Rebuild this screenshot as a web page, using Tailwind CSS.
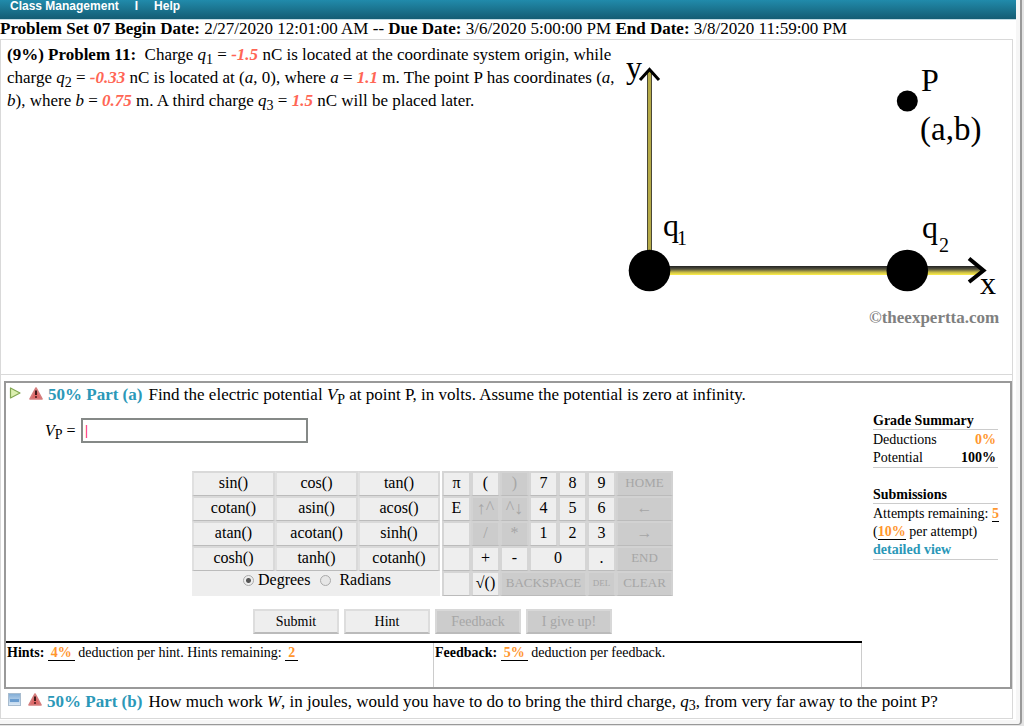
<!DOCTYPE html>
<html lang="en">
<head>
    <meta charset="UTF-8">
    <meta name="viewport" content="width=device-width, initial-scale=1.0">
    <script src="https://cdn.jsdelivr.net/npm/@tailwindcss/browser@4"></script>
    <title>Problem Set 07</title>
</head>
<body class="bg-[#e4e4e4] min-h-screen pr-[2px] pb-px font-['Liberation_Serif',serif] text-[16px] leading-[20px] text-black overflow-x-hidden">
    <div class="bg-[#f6f6f6] border-r-2 border-b border-[#999] rounded-br pr-1 pb-1">
        <div class="bg-white pb-px">
            <header class="h-[20px] bg-linear-to-b from-[#218bab] to-[#155d74] border-b border-[#c3dce4]">
                <nav class="flex gap-[16px] pl-[10px] h-[12px] items-center font-['Liberation_Sans',sans-serif] text-[12px] font-bold text-white">
                    <a href="#">Class Management</a>
                    <span>I</span>
                    <a href="#">Help</a>
                </nav>
            </header>

            <p class="h-[19px] text-[17px] leading-[18px] whitespace-nowrap"><b>Problem Set 07 Begin Date:</b> 2/27/2020 12:01:00 AM -- <b>Due Date:</b> 3/6/2020 5:00:00 PM <b>End Date:</b> 3/8/2020 11:59:00 PM</p>

            <!-- Problem statement -->
            <section class="mr-[3px] flex justify-between border border-[#d9d9d9] pl-[6px] pb-[35px]">
                <p class="w-[600px] pt-[3px] text-[17px] leading-[23px] whitespace-nowrap">
                    <b>(9%) Problem 11:</b> &nbsp;Charge <i>q</i><sub class="text-[14px]">1</sub> = <b class="italic text-[#ff6655]">-1.5</b> nC is located at the coordinate system origin, while<br>
                    charge <i>q</i><sub class="text-[14px]">2</sub> = <b class="italic text-[#ff6655]">-0.33</b> nC is located at (<i>a</i>, 0), where <i>a</i> = <b class="italic text-[#ff6655]">1.1</b> m. The point P has coordinates (<i>a</i>,<br>
                    <i>b</i>), where <i>b</i> = <b class="italic text-[#ff6655]">0.75</b> m. A third charge <i>q</i><sub class="text-[14px]">3</sub> = <b class="italic text-[#ff6655]">1.5</b> nC will be placed later.
                </p>
                <svg class="shrink-0" width="400" height="299" viewBox="612 40 400 299" font-family="Liberation Serif, serif">
                    <defs>
                        <linearGradient id="axisX" x1="0" y1="0" x2="0" y2="1">
                            <stop offset="0" stop-color="#222"/>
                            <stop offset="0.35" stop-color="#55533f"/>
                            <stop offset="0.7" stop-color="#c9bd45"/>
                            <stop offset="1" stop-color="#fff04a"/>
                        </linearGradient>
                    </defs>
                    <rect x="647" y="70" width="5" height="190" fill="#4a4836"/>
                    <rect x="648" y="70" width="3" height="190" fill="#b5aa48"/>
                    <path d="M640 80L649.500 69.500L659 80" fill="none" stroke="#000" stroke-width="3"/>
                    <rect x="665" y="266" width="316" height="9" fill="url(#axisX)"/>
                    <path d="M969 258.500L983.500 270.500L969 282" fill="none" stroke="#000" stroke-width="4"/>
                    <circle cx="649.500" cy="270.500" r="20.800"/>
                    <circle cx="907.300" cy="270.500" r="20.800"/>
                    <circle cx="907.300" cy="101" r="10.500"/>
                    <text x="626" y="78" font-size="32">y</text>
                    <text x="921" y="91" font-size="32">P</text>
                    <text x="920" y="140" font-size="33">(a,b)</text>
                    <text x="663" y="236" font-size="32">q</text>
                    <text x="677" y="245" font-size="20">1</text>
                    <text x="922" y="238" font-size="32">q</text>
                    <text x="939" y="252" font-size="20">2</text>
                    <text x="980" y="294" font-size="32">x</text>
                    <text x="869" y="323" font-size="17" font-weight="bold" fill="#808080">©theexpertta.com</text>
                </svg>
            </section>

            <section class="mr-[3px] border border-t-0 border-[#d9d9d9] pt-[6px] pl-[3px]">
                <!-- Part (a) -->
                <div class="border-2 border-[#999] pt-[2px] min-h-[308px] flex flex-col">
                    <div class="flex items-center h-[20px] pl-[3px] text-[17px]">
                        <svg class="mb-[4px] w-[12px] h-[12px]" viewBox="0 0 12 12"><path d="M1.500 1V11L11 6Z" fill="#dcefb0" stroke="#83a853" stroke-width="1.200" stroke-linejoin="round"/></svg>
                        <svg class="mb-[4px] ml-[8px] w-[14px] h-[13px]" viewBox="0 0 14 13"><path d="M7 1L13 12H1Z" fill="#df6868" stroke="#d57d7d" stroke-width="1.600" stroke-linejoin="round"/><path d="M7 3.500V8" stroke="#401818" stroke-width="2"/><circle cx="7" cy="10" r="1" fill="#401818"/></svg>
                        <b class="ml-[5px] text-[#2b98b8]">50% Part (a)</b>
                        <span class="ml-[6px]">Find the electric potential <i>V</i><sub class="text-[14px]">P</sub> at point P, in volts. Assume the potential is zero at infinity.</span>
                    </div>

                    <div class="flex justify-between grow">
                        <div class="w-[856px] flex flex-col">
                            <div class="flex items-center mt-[13px] pl-[39px]">
                                <label for="answer" class="w-[36px] whitespace-nowrap"><i>V</i><sub class="text-[14px]">P</sub> =</label>
                                <input id="answer" type="text" value="|" class="w-[227px] h-[25px] border-2 border-[#858987] px-[2px] text-[14px] font-bold text-[#ff1a66] outline-none">
                            </div>

                            <!-- Function and number keypads -->
                            <div class="flex gap-[2px] mt-[28px] ml-[186px]">
                                <div class="bg-[#eeeeee]">
                                    <div id="functions" class="grid grid-cols-[83px_83px_82px] auto-rows-[25px]"></div>
                                    <div class="flex justify-center h-[25px] pl-[2px] leading-[18px]">
                                        <input id="degrees" type="radio" name="angle" checked class="appearance-none mt-[4px] size-[11px] rounded-full border border-[#aaa] bg-[radial-gradient(circle,#555_0_2px,#eee_3px)]">
                                        <label for="degrees" class="ml-[4px]">Degrees</label>
                                        <input id="radians" type="radio" name="angle" class="appearance-none ml-[10px] mt-[4px] size-[11px] rounded-full border border-[#aaa] bg-[#e6e6e6]">
                                        <label for="radians" class="ml-[8px]">Radians</label>
                                    </div>
                                </div>
                                <div id="keys" class="grid grid-cols-[29px_29px_29px_29px_29px_29px_57px] auto-rows-[25px] h-[125px]"></div>
                            </div>

                            <div class="flex gap-[5px] mt-[13px] ml-[247px] text-[14px] leading-[18px]">
                                <button class="w-[86px] h-[25px] bg-[#eee] border-2 border-[#ddd] border-b-[#bbb]">Submit</button>
                                <button class="w-[86px] h-[25px] bg-[#eee] border-2 border-[#ddd] border-b-[#bbb]">Hint</button>
                                <button disabled class="w-[86px] h-[25px] bg-[#ccc] border-2 border-[#d8d8d8] border-b-[#bbb] text-[#a6a6a6]">Feedback</button>
                                <button disabled class="w-[86px] h-[25px] bg-[#ccc] border-2 border-[#d8d8d8] border-b-[#bbb] text-[#a6a6a6]">I give up!</button>
                            </div>

                            <div class="grid grid-cols-2 grow mt-[7px] border-t-2 border-black text-[14px] leading-[20px]">
                                <p class="pl-px border-r border-[#ccc]"><b>Hints:</b> <b class="inline-block h-[18px] px-[3px] border-b border-black text-[#ff962d]">4%</b> deduction per hint. Hints remaining: <b class="inline-block h-[18px] px-[3px] border-b border-black text-[#ff962d]">2</b></p>
                                <p class="pl-px border-r border-[#ccc]"><b>Feedback:</b> <b class="inline-block h-[18px] px-[3px] border-b border-black text-[#ff962d]">5%</b> deduction per feedback.</p>
                            </div>
                        </div>

                        <aside class="w-[125px] mr-[12px] mt-[7px] text-[14px] leading-[18px] whitespace-nowrap">
                            <h2 class="h-[18px] font-bold border-b border-[#ccc]">Grade Summary</h2>
                            <div class="pt-px border-b border-[#ccc] pr-[2px]">
                                <p class="flex justify-between">Deductions <b class="text-[#ff962d]">0%</b></p>
                                <p class="flex justify-between">Potential <b>100%</b></p>
                            </div>
                            <h2 class="h-[18px] font-bold border-b border-[#ccc] mt-[18px]">Submissions</h2>
                            <div class="pt-px border-b border-[#ccc]">
                                <p>Attempts remaining: <b class="inline-block h-[17px] border-b border-black text-[#ff962d]">5</b></p>
                                <p>(<b class="inline-block h-[17px] border-b border-black text-[#ff962d]">10%</b> per attempt)</p>
                                <a href="#" class="block h-[18px] font-bold text-[#2b98b8]">detailed view</a>
                            </div>
                        </aside>
                    </div>
                </div>

                <!-- Part (b) -->
                <div class="flex items-center h-[29px] pl-[4px] pb-[4px] text-[17px] whitespace-nowrap">
                    <svg class="w-[13px] h-[13px] mb-[4px]" viewBox="0 0 13 13"><defs><linearGradient id="box" x1="0" y1="0" x2="0" y2="1"><stop offset="0" stop-color="#7fabd5"/><stop offset="1" stop-color="#deebf7"/></linearGradient></defs><rect x="0.500" y="0.500" width="12" height="12" fill="url(#box)" stroke="#a8bccf"/><rect x="2" y="6" width="9" height="3" fill="#6a9dd0"/></svg>
                    <svg class="ml-[7px] mb-[4px] w-[14px] h-[13px]" viewBox="0 0 14 13"><path d="M7 1L13 12H1Z" fill="#df6868" stroke="#d57d7d" stroke-width="1.600" stroke-linejoin="round"/><path d="M7 3.500V8" stroke="#401818" stroke-width="2"/><circle cx="7" cy="10" r="1" fill="#401818"/></svg>
                    <b class="ml-[5px] text-[#2b98b8]">50% Part (b)</b>
                    <span class="ml-[6px]">How much work <i>W</i>, in joules, would you have to do to bring the third charge, <i>q</i><sub class="text-[14px]">3</sub>, from very far away to the point P?</span>
                </div>
            </section>
        </div>
    </div>

    <script>
        const functions = ['sin()', 'cos()', 'tan()', 'cotan()', 'asin()', 'acos()', 'atan()', 'acotan()', 'sinh()', 'cosh()', 'tanh()', 'cotanh()'];

        // off: disabled key, extra: span or text size
        const keys = [
            { t: 'π' }, { t: '(' }, { t: ')', off: true }, { t: '7' }, { t: '8' }, { t: '9' }, { t: 'HOME', off: true, extra: 'text-[13px]' },
            { t: 'E' }, { t: '↑^', off: true, extra: 'text-[18px]' }, { t: '^↓', off: true, extra: 'text-[18px]' }, { t: '4' }, { t: '5' }, { t: '6' }, { t: '←', off: true },
            { t: '' }, { t: '/', off: true }, { t: '*', off: true }, { t: '1' }, { t: '2' }, { t: '3' }, { t: '→', off: true },
            { t: '' }, { t: '+' }, { t: '-' }, { t: '0', extra: 'col-span-2' }, { t: '.' }, { t: 'END', off: true, extra: 'text-[13px]' },
            { t: '' }, { t: '√()' }, { t: 'BACKSPACE', off: true, extra: 'col-span-3 text-[13px]' }, { t: 'DEL', off: true, extra: 'text-[9px]' }, { t: 'CLEAR', off: true, extra: 'text-[13px]' }
        ];

        document.getElementById('functions').innerHTML = functions.map(name => `
            <button class="pb-[2px] bg-[#eee] border-2 border-b border-[#d9d9d9] border-l-[#e0e0e0] border-b-[#bbb] leading-[18px]">${name}</button>
        `).join('');

        document.getElementById('keys').innerHTML = keys.map(key => `
            <button ${key.off ? 'disabled' : ''} class="flex items-center justify-center pb-[2px] whitespace-nowrap border-2 border-b leading-[18px] ${key.off ? 'bg-[#ccc] border-[#d2d2d2] border-b-[#bbb] text-[#a6a6a6]' : 'bg-[#eee] border-[#d5d5d5] border-b-[#bbb]'} ${key.extra || ''}">${key.t}</button>
        `).join('');
    </script>
</body>
</html>
